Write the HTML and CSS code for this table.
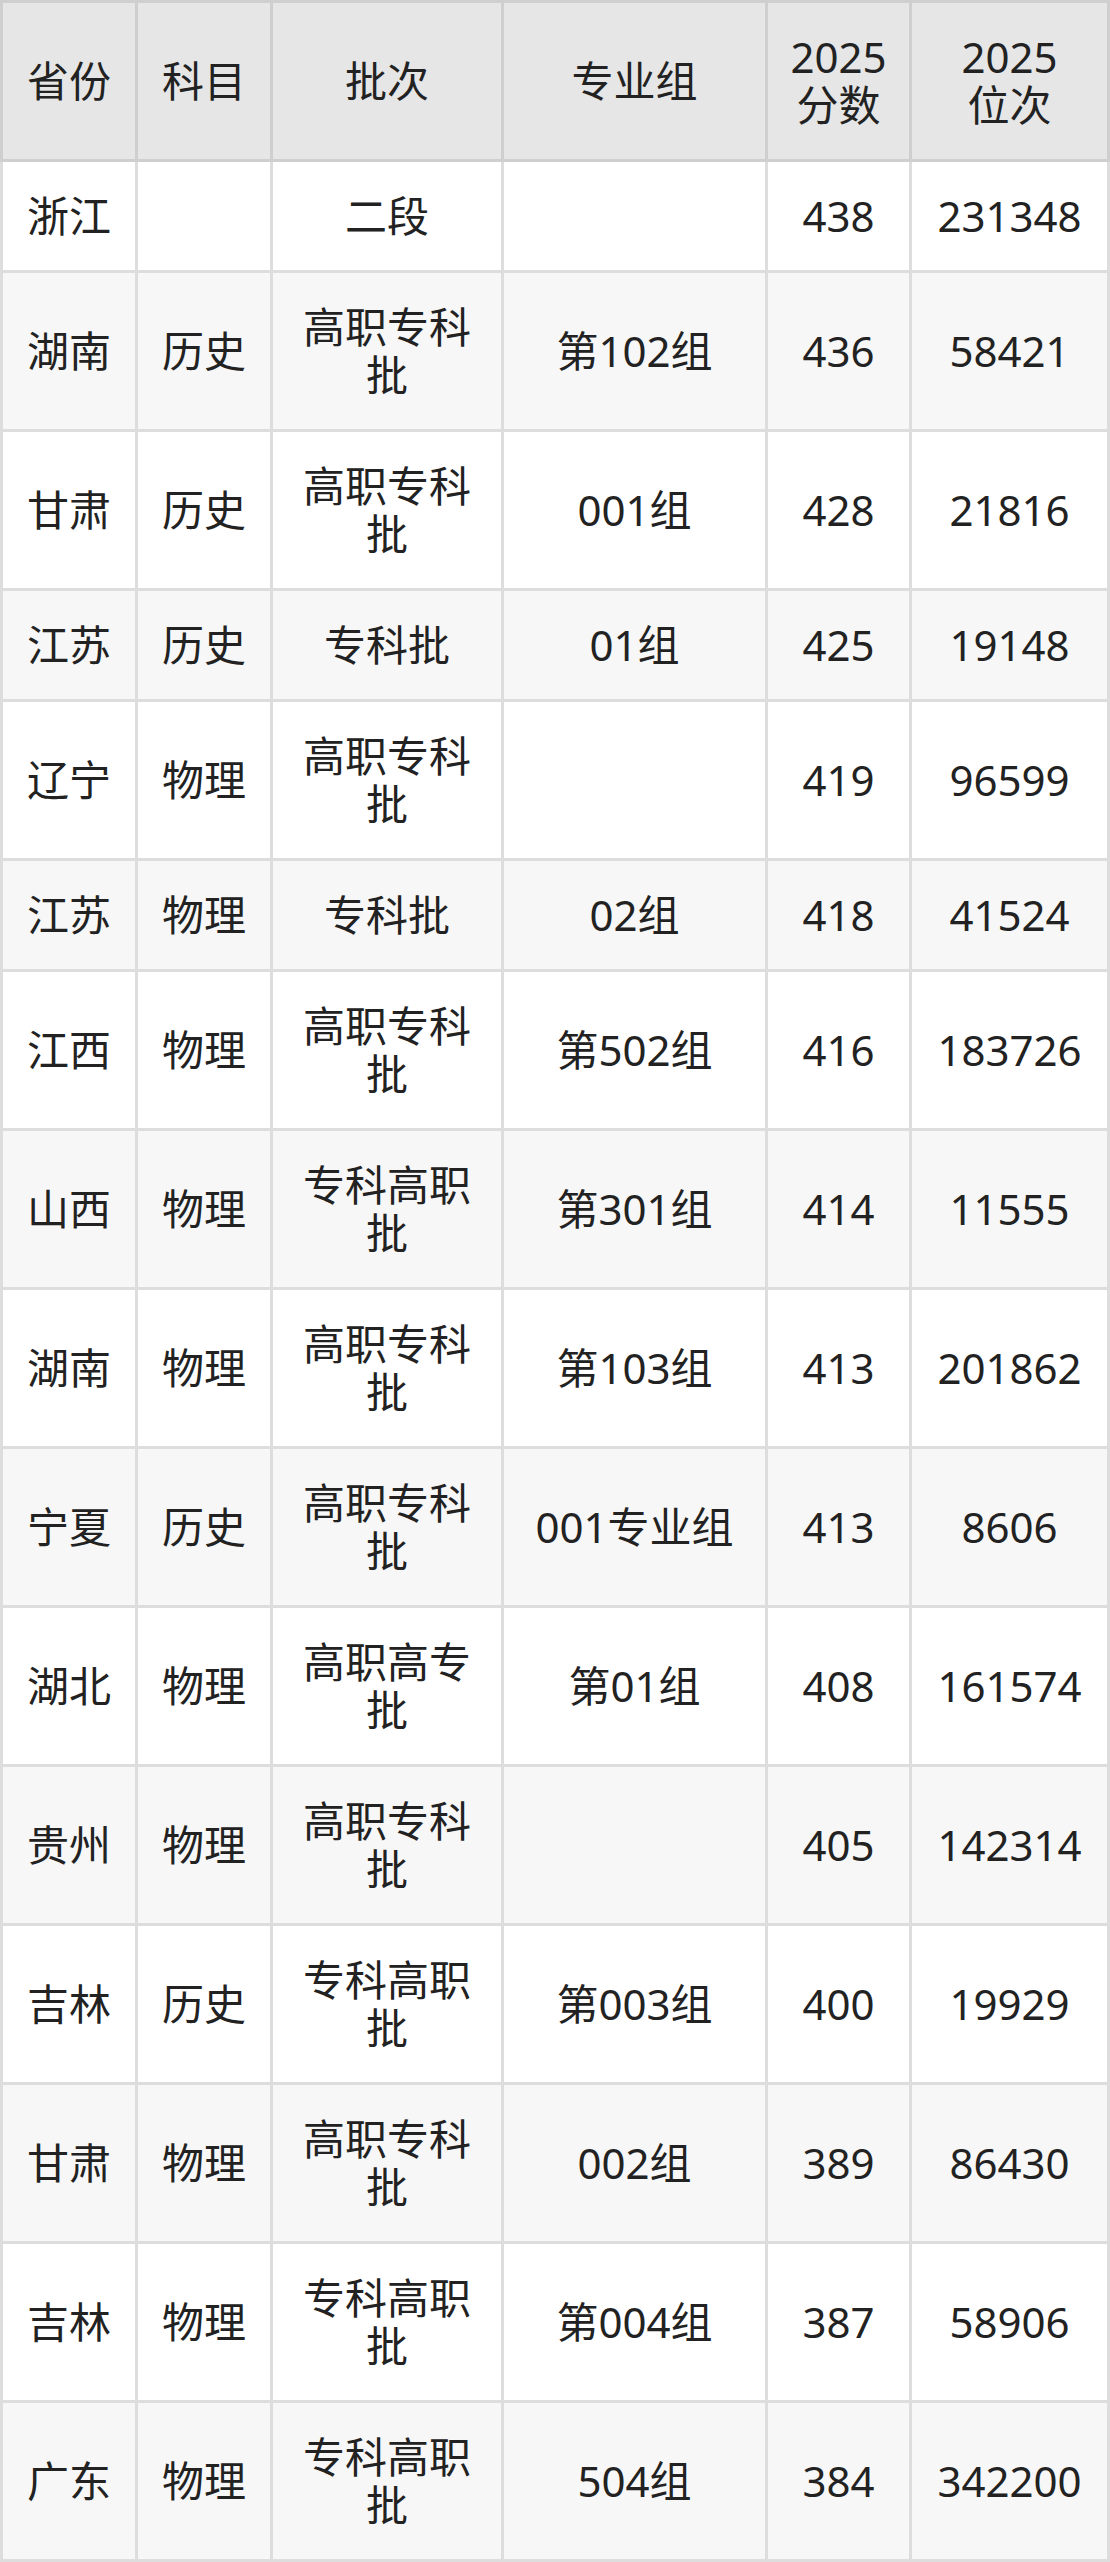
FILE: index.html
```html
<!DOCTYPE html>
<html lang="zh-CN">
<head>
<meta charset="utf-8">
<title>分数线</title>
<link rel="stylesheet" href="styles.css">
</head>
<body>
<table class="score-table">
  <colgroup>
    <col class="c-prov">
    <col class="c-subj">
    <col class="c-batch">
    <col class="c-group">
    <col class="c-score">
    <col class="c-rank">
  </colgroup>
  <thead>
    <tr>
      <th>省份</th>
      <th>科目</th>
      <th>批次</th>
      <th>专业组</th>
      <th>2025<br>分数</th>
      <th>2025<br>位次</th>
    </tr>
  </thead>
  <tbody>
    <tr><td>浙江</td><td></td><td>二段</td><td></td><td>438</td><td>231348</td></tr>
    <tr><td>湖南</td><td>历史</td><td>高职专科批</td><td>第102组</td><td>436</td><td>58421</td></tr>
    <tr><td>甘肃</td><td>历史</td><td>高职专科批</td><td>001组</td><td>428</td><td>21816</td></tr>
    <tr><td>江苏</td><td>历史</td><td>专科批</td><td>01组</td><td>425</td><td>19148</td></tr>
    <tr><td>辽宁</td><td>物理</td><td>高职专科批</td><td></td><td>419</td><td>96599</td></tr>
    <tr><td>江苏</td><td>物理</td><td>专科批</td><td>02组</td><td>418</td><td>41524</td></tr>
    <tr><td>江西</td><td>物理</td><td>高职专科批</td><td>第502组</td><td>416</td><td>183726</td></tr>
    <tr><td>山西</td><td>物理</td><td>专科高职批</td><td>第301组</td><td>414</td><td>11555</td></tr>
    <tr><td>湖南</td><td>物理</td><td>高职专科批</td><td>第103组</td><td>413</td><td>201862</td></tr>
    <tr><td>宁夏</td><td>历史</td><td>高职专科批</td><td>001专业组</td><td>413</td><td>8606</td></tr>
    <tr><td>湖北</td><td>物理</td><td>高职高专批</td><td>第01组</td><td>408</td><td>161574</td></tr>
    <tr><td>贵州</td><td>物理</td><td>高职专科批</td><td></td><td>405</td><td>142314</td></tr>
    <tr><td>吉林</td><td>历史</td><td>专科高职批</td><td>第003组</td><td>400</td><td>19929</td></tr>
    <tr><td>甘肃</td><td>物理</td><td>高职专科批</td><td>002组</td><td>389</td><td>86430</td></tr>
    <tr><td>吉林</td><td>物理</td><td>专科高职批</td><td>第004组</td><td>387</td><td>58906</td></tr>
    <tr><td>广东</td><td>物理</td><td>专科高职批</td><td>504组</td><td>384</td><td>342200</td></tr>
  </tbody>
</table>
</body>
</html>
```

FILE: styles.css
```css
html, body {
  margin: 0;
  padding: 0;
  background: #ffffff;
}

.score-table {
  width: 1110px;
  table-layout: fixed;
  border-collapse: separate;
  border-spacing: 0;
  font-family: "Noto Sans", "Noto Sans CJK SC", sans-serif;
  font-size: 42px;
  line-height: 48px;
  color: #222222;
}

.c-prov { width: 138px; }
.c-subj { width: 135px; }
.c-batch { width: 231px; }
.c-group { width: 264px; }
.c-score { width: 144px; }
.c-rank { width: 198px; }

.score-table th,
.score-table td {
  box-sizing: border-box;
  padding: 30px 12px;
  text-align: center;
  vertical-align: middle;
  font-weight: normal;
  border-right: 3px solid #dddddd;
  border-bottom: 3px solid #dddddd;
}

.score-table th:first-child,
.score-table td:first-child {
  border-left: 3px solid #dddddd;
}

.score-table th {
  background: #e6e6e6;
  border-top: 3px solid #cfcfcf;
  border-right-color: #cfcfcf;
  border-bottom-color: #cfcfcf;
}

.score-table th:first-child {
  border-left-color: #cfcfcf;
}

.score-table tbody tr:nth-child(odd) td {
  background: #ffffff;
}

.score-table tbody tr:nth-child(even) td {
  background: #f7f7f7;
}
```
